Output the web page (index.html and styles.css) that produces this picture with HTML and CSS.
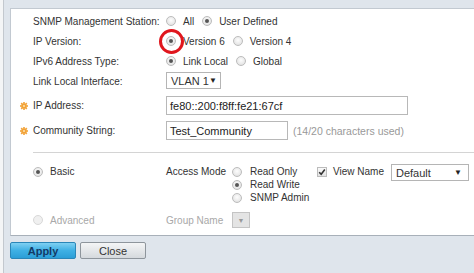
FILE: index.html
```html
<!DOCTYPE html>
<html>
<head>
<meta charset="utf-8">
<link rel="stylesheet" href="styles.css">
</head>
<body>
<div class="frame">
  <div class="panel">
    <div class="row">
      <span class="star"></span>
      <span class="label">SNMP Management Station:</span>
      <div class="value">
        <span class="radio"></span><span class="opt w-all">All</span>
        <span class="radio on"></span><span class="opt">User Defined</span>
      </div>
    </div>
    <div class="row">
      <span class="star"></span>
      <span class="label">IP Version:</span>
      <div class="value">
        <span class="radio on mark"></span><span class="opt w-v6">Version 6</span>
        <span class="radio"></span><span class="opt">Version 4</span>
      </div>
    </div>
    <div class="row">
      <span class="star"></span>
      <span class="label">IPv6 Address Type:</span>
      <div class="value">
        <span class="radio on"></span><span class="opt w-ll">Link Local</span>
        <span class="radio"></span><span class="opt">Global</span>
      </div>
    </div>
    <div class="row">
      <span class="star"></span>
      <span class="label">Link Local Interface:</span>
      <div class="value">
        <span class="select vlan">VLAN 1 <span class="arrow">▼</span></span>
      </div>
    </div>
    <div class="row tall">
      <span class="star"><svg width="8" height="8" viewBox="0 0 8 8"><g fill="#f2a33a"><circle cx="4" cy="4" r="2.6"/><rect x="3.2" y="0" width="1.6" height="8"/><rect x="0" y="3.2" width="8" height="1.6"/><rect x="3.2" y="0" width="1.6" height="8" transform="rotate(45 4 4)"/><rect x="3.2" y="0" width="1.6" height="8" transform="rotate(-45 4 4)"/></g><circle cx="4" cy="4" r="1" fill="#fbe3b5"/></svg></span>
      <span class="label">IP Address:</span>
      <div class="value">
        <span class="input ip">fe80::200:f8ff:fe21:67cf</span>
      </div>
    </div>
    <div class="row tall">
      <span class="star"><svg width="8" height="8" viewBox="0 0 8 8"><g fill="#f2a33a"><circle cx="4" cy="4" r="2.6"/><rect x="3.2" y="0" width="1.6" height="8"/><rect x="0" y="3.2" width="8" height="1.6"/><rect x="3.2" y="0" width="1.6" height="8" transform="rotate(45 4 4)"/><rect x="3.2" y="0" width="1.6" height="8" transform="rotate(-45 4 4)"/></g><circle cx="4" cy="4" r="1" fill="#fbe3b5"/></svg></span>
      <span class="label">Community String:</span>
      <div class="value">
        <span class="input comm">Test_Community</span>
        <span class="hint">(14/20 characters used)</span>
      </div>
    </div>
    <div class="sep"></div>
    <div class="access">
      <div class="mode">
        <span class="radio on"></span><span class="opt">Basic</span>
      </div>
      <span class="alabel">Access Mode</span>
      <div class="stack">
        <div class="line"><span class="radio"></span><span class="opt">Read Only</span></div>
        <div class="line"><span class="radio on"></span><span class="opt">Read Write</span></div>
        <div class="line"><span class="radio"></span><span class="opt">SNMP Admin</span></div>
      </div>
      <div class="view">
        <span class="check"><svg width="8" height="8" viewBox="0 0 8 8"><path d="M1.2 4.2 L3.2 6.2 L6.8 1.6" fill="none" stroke="#333" stroke-width="1.6"/></svg></span>
        <span class="opt">View Name</span>
        <span class="select def">Default <span class="arrow">▼</span></span>
      </div>
    </div>
    <div class="adv">
      <div class="mode">
        <span class="radio dis"></span><span class="opt dim">Advanced</span>
      </div>
      <span class="alabel dim">Group Name</span>
      <span class="select mini"><span class="arrow">▼</span></span>
    </div>
  </div>
  <div class="buttons">
    <button class="btn apply">Apply</button>
    <button class="btn close">Close</button>
  </div>
</div>
</body>
</html>
```
FILE: styles.css
```css
html, body {
  margin: 0;
  padding: 0;
  height: 100%;
  background: #f4f5f6;
  overflow: hidden;
}
body {
  font-family: "Liberation Sans", Arial, sans-serif;
  font-size: 10px;
  color: #333;
  white-space: nowrap;
}
.frame {
  margin-left: 3px;
  height: 100%;
  border-left: 1px solid #c3c8ce;
  background: #dfe5ec;
  padding-top: 8px;
  box-sizing: border-box;
}
.panel {
  margin-left: 6px;
  background: #fff;
  border: 1px solid #c2c9d1;
  border-right: none;
  border-bottom: 1px solid #a8b0b9;
  padding: 2px 0 6px 8px;
  height: 228px;
  box-sizing: border-box;
}
.row {
  display: flex;
  align-items: center;
  height: 20px;
}
.row.tall { height: 25px; }
.row:nth-child(5) { margin-top: 2px; }
.star {
  width: 14px;
  display: flex;
  align-items: center;
  padding-left: 1px;
  box-sizing: border-box;
}
.label { width: 133px; }
.value {
  display: flex;
  align-items: center;
}
.radio {
  position: relative;
  display: inline-block;
  width: 10px;
  height: 10px;
  border-radius: 50%;
  border: 1px solid #bcbcbc;
  box-sizing: border-box;
  background: radial-gradient(circle at 50% 40%, #fdfdfd 0%, #e6e6e6 70%, #d6d6d6 100%);
  flex: none;
}
.radio.on::after {
  content: "";
  position: absolute;
  left: 2px; top: 2px;
  width: 4px; height: 4px;
  border-radius: 50%;
  background: #555;
}
.radio.dis { border-color: #d8d8d8; background: #f0f0f0; }
.radio.mark::before {
  content: "";
  position: absolute;
  box-sizing: border-box;
  left: -8.5px; top: -8.5px;
  width: 25px; height: 25px;
  border: 3px solid #e0161d;
  border-radius: 50%;
}
.opt { margin-left: 7px; margin-right: 10px; }
.w-all { margin-right: 8px; }
.w-v6 { margin-right: 8px; }
.w-ll { margin-right: 8px; }
.select {
  display: inline-flex;
  align-items: center;
  justify-content: space-between;
  border: 1px solid #b5b5b5;
  background: #fff;
  height: 17px;
  box-sizing: border-box;
  padding: 0 4px;
  font-size: 11px;
}
.select.vlan { width: 55px; margin-top: -1px; }
.arrow { font-size: 8px; color: #222; }
.input {
  display: inline-flex;
  align-items: center;
  border: 1px solid #b8b8b8;
  height: 19px;
  box-sizing: border-box;
  padding: 0 3px;
  font-size: 11px;
  color: #222;
}
.input.ip { width: 242px; }
.input.comm { width: 122px; }
.hint { margin-left: 5px; color: #999; font-size: 10.5px; }
.sep {
  margin: 9px 0 0 14px;
  border-top: 1px solid #d4d4d4;
}
.access {
  display: flex;
  align-items: flex-start;
  padding-top: 12px;
}
.mode {
  width: 147px;
  padding-left: 14px;
  box-sizing: border-box;
  display: flex;
  align-items: center;
  height: 13px;
}
.alabel { width: 66px; line-height: 13px; }
.stack { width: 85px; }
.line { display: flex; align-items: center; height: 13px; }
.line .opt { margin-left: 8px; }
.view { display: flex; align-items: center; height: 13px; }
.view .opt { margin-left: 6px; margin-right: 0; width: 58px; }
.check {
  display: inline-flex;
  align-items: center;
  justify-content: center;
  width: 10px; height: 10px;
  border: 1px solid #bcbcbc;
  box-sizing: border-box;
  background: linear-gradient(#fafafa, #e2e2e2);
}
.select.def { width: 78px; height: 17px; margin-top: 2px; padding: 0 6px 0 4px; }
.adv {
  display: flex;
  align-items: center;
  height: 16px;
  margin-top: 8px;
}
.adv .mode { height: 16px; }
.dim { color: #a8a8a8; }
.select.mini {
  width: 18px;
  height: 16px;
  justify-content: center;
  padding: 0;
  background: #e4e4e4;
  border-color: #c4c4c4;
}
.select.mini .arrow { color: #999; font-size: 7px; }
.buttons {
  display: flex;
  gap: 4px;
  margin: 6px 0 0 6px;
}
.btn {
  width: 66px;
  height: 17px;
  font-family: "Liberation Sans", Arial, sans-serif;
  font-size: 11px;
  border-radius: 2px;
  padding: 0;
}
.apply {
  background: linear-gradient(#7fd0f2, #3fb0e4 50%, #2b9ed7);
  border: 1px solid #2a86b8;
  color: #143a66;
  font-weight: bold;
}
.close {
  background: linear-gradient(#f4f5f6, #d5d9dd);
  border: 1px solid #8e959c;
  color: #333;
}
```
